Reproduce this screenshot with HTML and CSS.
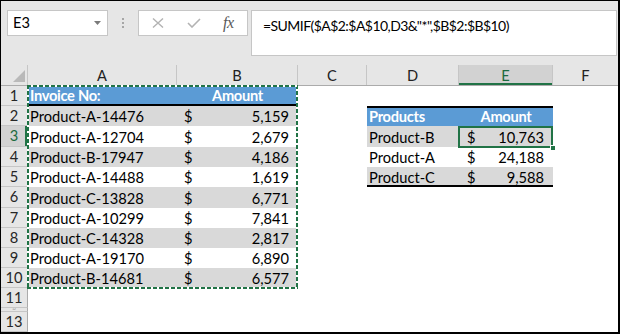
FILE: index.html
```html
<!DOCTYPE html>
<html>
<head>
<meta charset="utf-8">
<link rel="stylesheet" href="styles.css">
</head>
<body>
<div class="frame">
  <div class="toolbar">
    <div class="namebox">
      <span class="ref">E3</span>
      <svg class="caret" width="7" height="4" viewBox="0 0 7 4"><path d="M0 0H7L3.5 4Z" fill="#7a7a7a"/></svg>
    </div>
    <div class="grip"><i></i><i></i><i></i></div>
    <div class="fxbtns">
      <svg class="ico-x" width="12" height="10" viewBox="0 0 12 10"><path d="M1 0.5L11 9.5M11 0.5L1 9.5" stroke="#b3b3b3" stroke-width="1.4" fill="none"/></svg>
      <svg class="ico-check" width="14" height="10" viewBox="0 0 14 10"><path d="M1 5L5 9L13 1" stroke="#b3b3b3" stroke-width="1.6" fill="none"/></svg>
      <span class="fx">fx</span>
    </div>
    <div class="formula">=SUMIF($A$2:$A$10,D3&amp;"*",$B$2:$B$10)</div>
  </div>

  <div class="sheet">
    <div class="row colhdr">
      <div class="corner"><svg width="26" height="20" viewBox="0 0 26 20"><path d="M24 5V17H12Z" fill="#b9b9b9"/></svg></div>
      <div class="ch">A</div>
      <div class="ch">B</div>
      <div class="ch">C</div>
      <div class="ch">D</div>
      <div class="ch ch-active">E</div>
      <div class="ch ch-last">F</div>
    </div>

    <div class="row r20">
      <div class="rh">1</div>
      <div class="c blue th hdr-line">Invoice No:</div>
      <div class="c blue th hdr-line center">Amount</div>
      <div class="c"></div><div class="c"></div><div class="c"></div><div class="c"></div>
    </div>

    <div class="row r20">
      <div class="rh">2</div>
      <div class="c band">Product-A-14476</div>
      <div class="c band acc"><span>$</span><span>5,159</span></div>
      <div class="c"></div>
      <div class="c blue th top-line d">Products</div>
      <div class="c blue th top-line center">Amount</div>
      <div class="c"></div>
    </div>

    <div class="row r21">
      <div class="rh rh-active">3</div>
      <div class="c">Product-A-12704</div>
      <div class="c acc"><span>$</span><span>2,679</span></div>
      <div class="c"></div>
      <div class="c band d">Product-B</div>
      <div class="c band acc e active"><span>$</span><span>10,763</span><div class="sel"></div><div class="handle"></div></div>
      <div class="c"></div>
    </div>

    <div class="row r20">
      <div class="rh">4</div>
      <div class="c band">Product-B-17947</div>
      <div class="c band acc"><span>$</span><span>4,186</span></div>
      <div class="c"></div>
      <div class="c d">Product-A</div>
      <div class="c acc e"><span>$</span><span>24,188</span></div>
      <div class="c"></div>
    </div>

    <div class="row r20">
      <div class="rh">5</div>
      <div class="c">Product-A-14488</div>
      <div class="c acc"><span>$</span><span>1,619</span></div>
      <div class="c"></div>
      <div class="c band bot-line d">Product-C</div>
      <div class="c band bot-line acc e"><span>$</span><span>9,588</span></div>
      <div class="c"></div>
    </div>

    <div class="row r21">
      <div class="rh">6</div>
      <div class="c band">Product-C-13828</div>
      <div class="c band acc"><span>$</span><span>6,771</span></div>
      <div class="c"></div><div class="c"></div><div class="c"></div><div class="c"></div>
    </div>

    <div class="row r20">
      <div class="rh">7</div>
      <div class="c">Product-A-10299</div>
      <div class="c acc"><span>$</span><span>7,841</span></div>
      <div class="c"></div><div class="c"></div><div class="c"></div><div class="c"></div>
    </div>

    <div class="row r20">
      <div class="rh">8</div>
      <div class="c band">Product-C-14328</div>
      <div class="c band acc"><span>$</span><span>2,817</span></div>
      <div class="c"></div><div class="c"></div><div class="c"></div><div class="c"></div>
    </div>

    <div class="row r20">
      <div class="rh">9</div>
      <div class="c">Product-A-19170</div>
      <div class="c acc"><span>$</span><span>6,890</span></div>
      <div class="c"></div><div class="c"></div><div class="c"></div><div class="c"></div>
    </div>

    <div class="row r20">
      <div class="rh">10</div>
      <div class="c band">Product-B-14681</div>
      <div class="c band acc"><span>$</span><span>6,577</span></div>
      <div class="c"></div><div class="c"></div><div class="c"></div><div class="c"></div>
    </div>

    <div class="row r20">
      <div class="rh">11</div>
      <div class="c"></div><div class="c"></div><div class="c"></div><div class="c"></div><div class="c"></div><div class="c"></div>
    </div>

    <div class="row r4">
      <div class="rh rh-tiny">12</div>
      <div class="c"></div><div class="c"></div><div class="c"></div><div class="c"></div><div class="c"></div><div class="c"></div>
    </div>

    <div class="row r20">
      <div class="rh">13</div>
      <div class="c"></div><div class="c"></div><div class="c"></div><div class="c"></div><div class="c"></div><div class="c"></div>
    </div>

    <div class="marquee"></div>
  </div>
</div>
</body>
</html>
```

FILE: styles.css
```css
* { box-sizing: border-box; margin: 0; padding: 0; }
html, body { width: 620px; height: 334px; overflow: hidden; background: #fff; }
body { font-family: Lato, "Noto Sans", sans-serif; font-size: 14.67px; color: #000; }

.frame {
  width: 620px; height: 334px;
  border-style: solid; border-color: #000;
  border-width: 1px 2px 2px 1px;
  overflow: hidden;
  display: flex; flex-direction: column;
}

/* toolbar */
.toolbar {
  height: 64px; flex: none;
  background: #e6e6e6;
  display: flex; align-items: flex-start;
  padding: 9px 1px 0 6px;
}
.namebox {
  width: 101px; height: 26px; flex: none;
  background: #fff; border: 1px solid #c6c6c6;
  display: flex; align-items: center; justify-content: space-between;
  padding: 0 6px 0 5px;
}
.ref { line-height: 18px; color: #000; }
.grip {
  flex: none; width: 2px; margin: 8px 14px 0 14px;
  display: flex; flex-direction: column; gap: 2px;
}
.grip i { display: block; width: 2px; height: 2px; background: #a6a6a6; }
.fxbtns {
  width: 110px; height: 26px; flex: none;
  background: #fff; border: 1px solid #c6c6c6;
  display: flex; align-items: center;
  padding-left: 13px;
}
.ico-check { margin-left: 23px; }
.fx {
  margin-left: 22px;
  font-family: "Liberation Serif", serif; font-style: italic;
  font-size: 16px; color: #595959; line-height: 16px;
  letter-spacing: -0.5px;
}
.formula {
  flex: 1; height: 46px; margin-left: 3px;
  background: #fff; border: 1px solid #c6c6c6;
  padding: 6px 0 0 11px;
  font-size: 14px; letter-spacing: -0.55px;
  line-height: 18px; white-space: nowrap;
}

/* sheet */
.sheet { position: relative; flex: 1; }
.row {
  display: grid;
  grid-template-columns: 27px 149px 121px 69px 92px 94px 1fr;
}
.r20 { height: 20px; }
.r21 { height: 21px; }
.r4 { height: 4px; }

.colhdr { height: 21px; background: #e6e6e6; border-bottom: 1px solid #ababab; }
.corner { border-right: 1px solid #c6c6c6; }
.corner svg { display: block; }
.ch {
  display: flex; align-items: center; justify-content: center;
  border-right: 1px solid #c6c6c6; color: #222;
  padding-top: 1px;
}
.ch-last { border-right: none; }
.ch-active { background: #d2d2d2; color: #1d6b40; box-shadow: inset 0 -2px 0 #217346; }

.rh {
  background: #e6e6e6;
  border-right: 1px solid #ababab;
  border-bottom: 1px solid #c6c6c6;
  display: flex; align-items: center; justify-content: center;
  color: #262626; overflow: hidden; line-height: 18px;
}
.rh-active { background: #d2d2d2; color: #1d6b40; box-shadow: inset -2px 0 0 #217346; }
.rh-tiny { font-size: 3px; line-height: 3px; color: #777; }

.c {
  display: flex; align-items: flex-end;
  padding: 0 2px;
  line-height: 18px; white-space: nowrap; overflow: hidden;
}
.band { background: #d9d9d9; }
.blue { background: #5b9bd5; }
.th { color: #fff; font-weight: 700; letter-spacing: -0.3px; }
.center { justify-content: center; }
.hdr-line { box-shadow: inset 0 -2px 0 #000; padding-bottom: 1px; }
.top-line { box-shadow: inset 0 2px 0 #000; }
.bot-line { box-shadow: inset 0 -2px 0 #000; }
.d { padding-left: 2px; }
.acc { justify-content: space-between; padding: 0 9px 0 7px; }
.acc.e { padding-left: 8px; }

.active { position: relative; overflow: visible; }
.sel {
  position: absolute; left: -1px; top: 0; right: 0; bottom: -1px;
  border: 2px solid #217346;
}
.handle {
  position: absolute; right: -3px; bottom: -4px;
  width: 6px; height: 6px;
  background: #217346; border: 1px solid #fff;
}

.marquee {
  position: absolute; left: 26px; top: 20px; width: 271px; height: 204px;
  pointer-events: none;
  background:
    repeating-linear-gradient(90deg, #217346 0 4px, #fff 4px 6px) left top / 100% 2px no-repeat,
    repeating-linear-gradient(90deg, #217346 0 4px, #fff 4px 6px) left bottom / 100% 2px no-repeat,
    repeating-linear-gradient(180deg, #217346 0 4px, #fff 4px 6px) left top / 2px 100% no-repeat,
    repeating-linear-gradient(180deg, #217346 0 4px, #fff 4px 6px) right top / 2px 100% no-repeat;
}
```
